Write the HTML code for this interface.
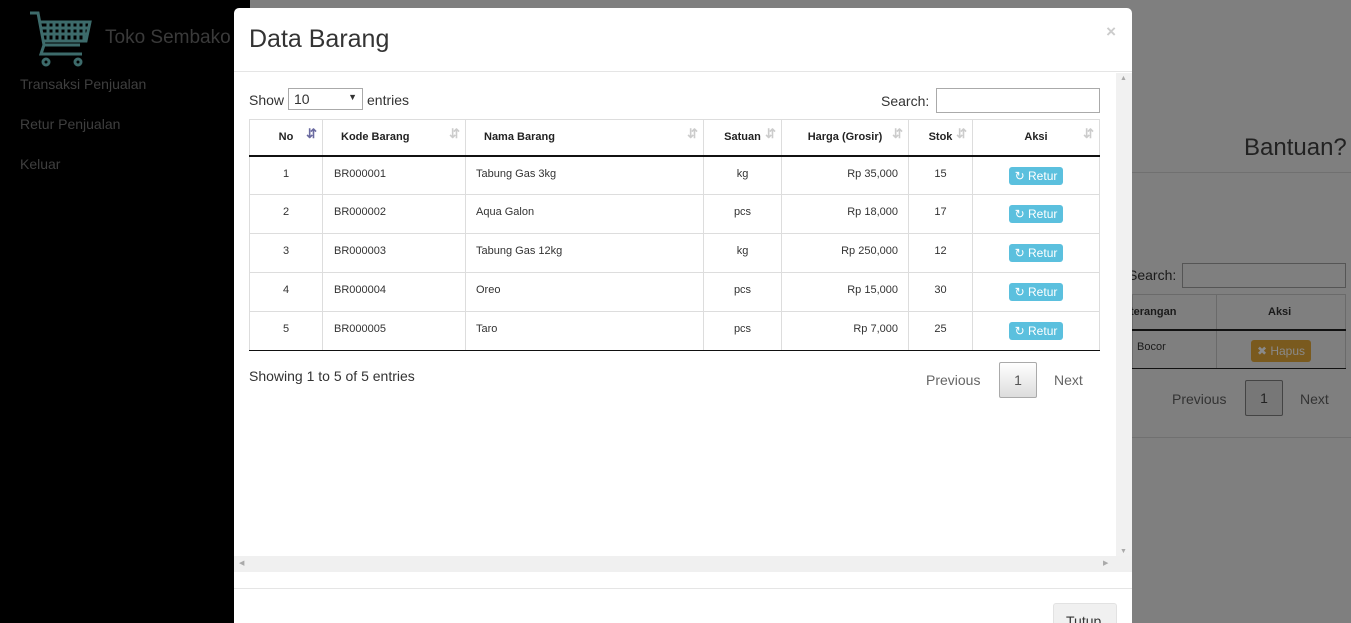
<!DOCTYPE html>
<html><head><meta charset="utf-8"><style>
*{box-sizing:border-box;margin:0;padding:0}
html,body{width:1351px;height:623px;overflow:hidden}
body{position:relative;font-family:"Liberation Sans",sans-serif;background:#7f7f7f;color:#333}
.side{position:absolute;left:0;top:0;width:250px;height:623px;background:#000}
.side .brand{position:absolute;left:105px;top:27px;font-size:19px;color:#3a3a3a}
.side a{position:absolute;left:20px;font-size:14px;color:#3f3f3f}
.bg{position:absolute;color:#1a1a1a}
.modal{position:absolute;left:234px;top:8px;width:898px;height:615px;background:#fff;border-radius:5px 5px 0 0;overflow:hidden}
.mh{height:64px;border-bottom:1px solid #e5e5e5;padding:17px 15px}
.mh h4{font-size:25px;font-weight:normal;color:#333}
.close{position:absolute;right:16px;top:14px;color:#ccc;font-size:17px;font-weight:bold}
.vs{position:absolute;left:882px;top:65px;width:16px;height:484px;background:#f1f1f1}
.hs{position:absolute;left:0;top:548px;width:898px;height:16px;background:#f0f0f0}
.mf{position:absolute;left:0;top:580px;width:898px;border-top:1px solid #e5e5e5}
.btn{position:absolute;background:#f0f0f0;border:1px solid #e2e2e2;border-radius:3px}
table{border-collapse:collapse;position:absolute;left:15px;top:111px;width:851px;font-size:11px}
th{height:36px;border:1px solid #ddd;border-bottom:2px solid #111;font-size:11px;position:relative;color:#222}
td{height:39px;border:1px solid #ddd;vertical-align:top;padding-top:11px;color:#333}
tr:last-child td{border-bottom:1px solid #111}
.s{position:absolute;right:5px;top:6px;color:#ccc;font-size:13px}
.r{display:inline-block;background:#5bc0de;color:#fff;border-radius:3px;padding:2px 6px;font-size:12px;margin-top:-1px}
.pg{position:absolute;font-size:14px;color:#666}
.pb{position:absolute;width:38px;height:36px;border:1px solid #aaa;background:linear-gradient(#fff,#ddd);border-radius:2px;text-align:center;line-height:34px;font-size:14px;color:#555}
</style></head><body>
<div class="side">
<svg style="position:absolute;left:28px;top:10px" width="64" height="58" viewBox="0 0 64 58" fill="none" stroke="#3d6b6b" stroke-width="3"><path d="M2 3h8l6 32h36"/><path d="M12 12h50l-4 19H16"/><path d="M20 12v19M26 12v19M32 12v19M38 12v19M44 12v19M50 12v19M56 12v19M13 18h48M14 24h46"/><path d="M16 35l-3 9h41"/><circle cx="18" cy="52" r="3"/><circle cx="50" cy="52" r="3"/></svg>
<div class="brand">Toko Sembako</div>
<a style="top:76px">Transaksi Penjualan</a>
<a style="top:116px">Retur Penjualan</a>
<a style="top:156px">Keluar</a>
</div>
<div class="bg" style="left:1244px;top:134px;font-size:24px;color:#222">Bantuan?</div>
<div style="position:absolute;left:1132px;top:172px;width:219px;border-top:1px solid #707070"></div>
<div class="bg" style="left:1128px;top:267px;font-size:14px">Search:</div>
<div style="position:absolute;left:1182px;top:263px;width:164px;height:25px;border:1px solid #555"></div>
<div style="position:absolute;left:1132px;top:294px;width:214px;height:75px;border:1px solid #6a6a6a"></div>
<div style="position:absolute;left:1216px;top:294px;height:75px;border-left:1px solid #6a6a6a"></div>
<div style="position:absolute;left:1132px;top:329px;width:214px;border-top:2px solid #111"></div>
<div style="position:absolute;left:1132px;top:368px;width:214px;border-top:1px solid #111"></div>
<div class="bg" style="left:1130px;top:306px;font-size:11px;font-weight:bold">terangan</div>
<div class="bg" style="left:1268px;top:306px;font-size:11px;font-weight:bold">Aksi</div>
<div class="bg" style="left:1137px;top:341px;font-size:11px">Bocor</div>
<div style="position:absolute;left:1251px;top:340px;width:60px;height:22px;background:#7a5a1e;border-radius:3px;color:#8a8a8a;font-size:12px;line-height:22px;text-align:center">✖ Hapus</div>
<div class="pg" style="left:1172px;top:391px;color:#333">Previous</div>
<div class="pb" style="left:1245px;top:380px;background:#777;border-color:#444;color:#222">1</div>
<div class="pg" style="left:1300px;top:391px;color:#333">Next</div>
<div style="position:absolute;left:1132px;top:437px;width:219px;border-top:1px solid #707070"></div>

<div class="modal">
<div class="mh"><h4>Data Barang</h4></div>
<div class="close">×</div>
<div style="position:absolute;left:15px;top:84px;font-size:14px">Show</div>
<div style="position:absolute;left:54px;top:80px;width:75px;height:22px;border:1px solid #aaa;font-size:14px;padding:2px 5px">10<span style="position:absolute;right:5px;top:3px;font-size:9px">▼</span></div>
<div style="position:absolute;left:133px;top:84px;font-size:14px">entries</div>
<div style="position:absolute;left:647px;top:85px;font-size:14px">Search:</div>
<div style="position:absolute;left:702px;top:80px;width:164px;height:25px;border:1px solid #aaa"></div>
<table>
<tr><th style="width:73px">No<span class="s" style="color:#6a6aa0">⇵</span></th><th style="width:143px;text-align:left;padding-left:18px">Kode Barang<span class="s">⇵</span></th><th style="width:238px;text-align:left;padding-left:18px">Nama Barang<span class="s">⇵</span></th><th style="width:78px">Satuan<span class="s">⇵</span></th><th style="width:127px">Harga (Grosir)<span class="s">⇵</span></th><th style="width:64px">Stok<span class="s">⇵</span></th><th>Aksi<span class="s">⇵</span></th></tr>
<tr><td align="center">1</td><td style="padding-left:11px">BR000001</td><td style="padding-left:10px">Tabung Gas 3kg</td><td align="center">kg</td><td align="right" style="padding-right:10px">Rp 35,000</td><td align="center">15</td><td align="center"><span class="r">↻ Retur</span></td></tr>
<tr><td align="center">2</td><td style="padding-left:11px">BR000002</td><td style="padding-left:10px">Aqua Galon</td><td align="center">pcs</td><td align="right" style="padding-right:10px">Rp 18,000</td><td align="center">17</td><td align="center"><span class="r">↻ Retur</span></td></tr>
<tr><td align="center">3</td><td style="padding-left:11px">BR000003</td><td style="padding-left:10px">Tabung Gas 12kg</td><td align="center">kg</td><td align="right" style="padding-right:10px">Rp 250,000</td><td align="center">12</td><td align="center"><span class="r">↻ Retur</span></td></tr>
<tr><td align="center">4</td><td style="padding-left:11px">BR000004</td><td style="padding-left:10px">Oreo</td><td align="center">pcs</td><td align="right" style="padding-right:10px">Rp 15,000</td><td align="center">30</td><td align="center"><span class="r">↻ Retur</span></td></tr>
<tr><td align="center">5</td><td style="padding-left:11px">BR000005</td><td style="padding-left:10px">Taro</td><td align="center">pcs</td><td align="right" style="padding-right:10px">Rp 7,000</td><td align="center">25</td><td align="center"><span class="r">↻ Retur</span></td></tr>
</table>
<div style="position:absolute;left:15px;top:360px;font-size:14px">Showing 1 to 5 of 5 entries</div>
<div class="pg" style="left:692px;top:364px">Previous</div>
<div class="pb" style="left:765px;top:354px">1</div>
<div class="pg" style="left:820px;top:364px">Next</div>
<div class="vs"><span style="position:absolute;left:4px;top:2px;font-size:7px;color:#aaa">▲</span><span style="position:absolute;left:4px;bottom:2px;font-size:7px;color:#aaa">▼</span></div>
<div class="hs"><span style="position:absolute;left:5px;top:3px;font-size:7px;color:#aaa">◀</span><span style="position:absolute;left:869px;top:3px;font-size:7px;color:#aaa">▶</span></div>
<div class="mf"></div>
<div class="btn" style="left:819px;top:595px;width:64px;height:34px;font-size:14px;padding:9px 12px">Tutup</div>
</div>
</body></html>
